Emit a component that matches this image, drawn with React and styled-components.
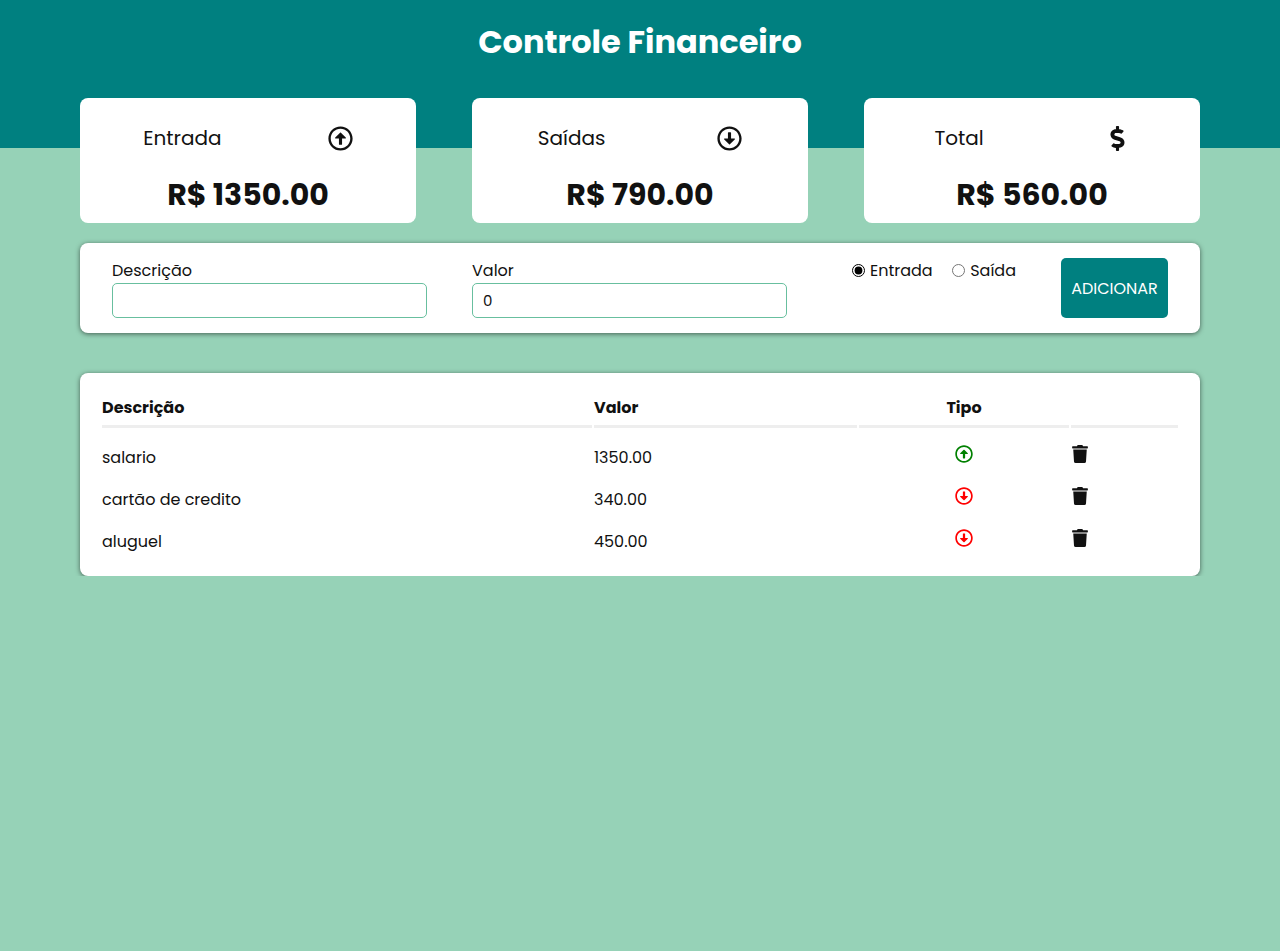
import styled, { createGlobalStyle } from "styled-components";
import {
  FaRegArrowAltCircleUp,
  FaRegArrowAltCircleDown,
  FaDollarSign,
  FaTrash,
} from "react-icons/fa";

const GlobalStyle = createGlobalStyle`
  * {
    margin: 0;
    padding: 0;
    box-sizing: border-box;
    font-family: Poppins, Inter, "Noto Sans", sans-serif;
  }
  body {
    background-color: #96d2b7;
    color: #111;
  }
`;

const Header = styled.header`
  height: 148px;
  background-color: teal;
  padding-top: 18px;
  text-align: center;
`;

const Title = styled.h1`
  font-size: 32px;
  line-height: 48px;
  font-weight: 700;
  color: #fff;
`;

const Cards = styled.section`
  width: 1120px;
  margin: -50px auto 0;
  display: flex;
  justify-content: space-between;
`;

const Card = styled.div`
  width: 336px;
  height: 125px;
  background: #fff;
  border-radius: 8px;
  padding-top: 28px;
`;

const CardHead = styled.div`
  height: 25px;
  display: flex;
  align-items: center;
  justify-content: space-around;
  padding: 0 10px;
  font-size: 20px;
  span {
    margin-top: -2px;
  }
  svg {
    width: 25px;
    height: 25px;
  }
`;

const CardValue = styled.div`
  margin-top: 21px;
  text-align: center;
  font-size: 30px;
  line-height: 45px;
  font-weight: 700;
`;

const Form = styled.form`
  width: 1120px;
  height: 90px;
  margin: 20px auto 0;
  background: #fff;
  border-radius: 8px;
  box-shadow: 0 1px 5px rgba(0, 0, 0, 0.55);
  display: flex;
  gap: 45px;
  padding: 15px 32px 0;
`;

const Field = styled.div`
  display: flex;
  flex-direction: column;
`;

const Label = styled.label`
  font-size: 16px;
  line-height: 25px;
  height: 25px;
`;

const Input = styled.input`
  width: 315px;
  height: 35px;
  border: 1px solid #68bf9f;
  border-radius: 5px;
  padding: 0 10px;
  font-size: 15px;
  color: #111;
  outline: none;
`;

const RadioGroup = styled.div`
  width: 164px;
  height: 24px;
  margin-left: 20px;
  display: flex;
  align-items: center;
  gap: 19.5px;
  font-size: 16px;
`;

const RadioLabel = styled.label`
  display: flex;
  align-items: center;
  gap: 5px;
  input {
    width: 13px;
    height: 13px;
    margin: 0;
    accent-color: #000;
  }
`;

const AddButton = styled.button`
  width: 107px;
  height: 60px;
  background: teal;
  color: #fff;
  font-size: 16px;
  border: none;
  border-radius: 5px;
`;

const TablePanel = styled.section`
  width: 1120px;
  height: 203px;
  margin: 40px auto 0;
  padding: 20px;
  background: #fff;
  border-radius: 8px;
  box-shadow: 0 1px 5px rgba(0, 0, 0, 0.55);
`;

const Table = styled.table`
  width: 100%;
  table-layout: fixed;
  border-spacing: 2px;
`;

const Th = styled.th`
  height: 33px;
  padding-bottom: 5px;
  text-align: ${(p) => p.$align || "left"};
  font-size: 16px;
  font-weight: 700;
  border-bottom: 3px solid #eee;
  vertical-align: middle;
`;

const Td = styled.td`
  height: 40px;
  font-size: 16px;
  text-align: ${(p) => p.$align || "left"};
  vertical-align: middle;
  padding-top: 14px;
`;

const IconCell = styled(Td)`
  padding-top: 5px;
  svg {
    display: inline-block;
    vertical-align: middle;
    width: 18px;
    height: 18px;
    color: ${(p) => p.$color || "#111"};
  }
`;

const rows = [
  { desc: "salario", value: "1350.00", up: true },
  { desc: "cartão de credito", value: "340.00", up: false },
  { desc: "aluguel", value: "450.00", up: false },
];

export default function App() {
  return (
    <>
      <GlobalStyle />
      <Header>
        <Title>Controle Financeiro</Title>
      </Header>

      <Cards>
        <Card>
          <CardHead>
            <span>Entrada</span>
            <FaRegArrowAltCircleUp />
          </CardHead>
          <CardValue>R$ 1350.00</CardValue>
        </Card>
        <Card>
          <CardHead>
            <span>Saídas</span>
            <FaRegArrowAltCircleDown />
          </CardHead>
          <CardValue>R$ 790.00</CardValue>
        </Card>
        <Card>
          <CardHead>
            <span>Total</span>
            <FaDollarSign />
          </CardHead>
          <CardValue>R$ 560.00</CardValue>
        </Card>
      </Cards>

      <Form>
        <Field>
          <Label>Descrição</Label>
          <Input />
        </Field>
        <Field>
          <Label>Valor</Label>
          <Input defaultValue="0" />
        </Field>
        <RadioGroup>
          <RadioLabel>
            <input type="radio" name="tipo" defaultChecked />
            Entrada
          </RadioLabel>
          <RadioLabel>
            <input type="radio" name="tipo" />
            Saída
          </RadioLabel>
        </RadioGroup>
        <AddButton type="button">ADICIONAR</AddButton>
      </Form>

      <TablePanel>
        <Table>
          <colgroup>
            <col style={{ width: 490 }} />
            <col style={{ width: 263 }} />
            <col style={{ width: 210 }} />
            <col style={{ width: 107 }} />
          </colgroup>
          <thead>
            <tr>
              <Th>Descrição</Th>
              <Th>Valor</Th>
              <Th $align="center">Tipo</Th>
              <Th />
            </tr>
          </thead>
          <tbody>
            {rows.map((r) => (
              <tr key={r.desc}>
                <Td>{r.desc}</Td>
                <Td>{r.value}</Td>
                <IconCell $align="center" $color={r.up ? "green" : "red"}>
                  {r.up ? <FaRegArrowAltCircleUp /> : <FaRegArrowAltCircleDown />}
                </IconCell>
                <IconCell>
                  <FaTrash />
                </IconCell>
              </tr>
            ))}
          </tbody>
        </Table>
      </TablePanel>
    </>
  );
}
